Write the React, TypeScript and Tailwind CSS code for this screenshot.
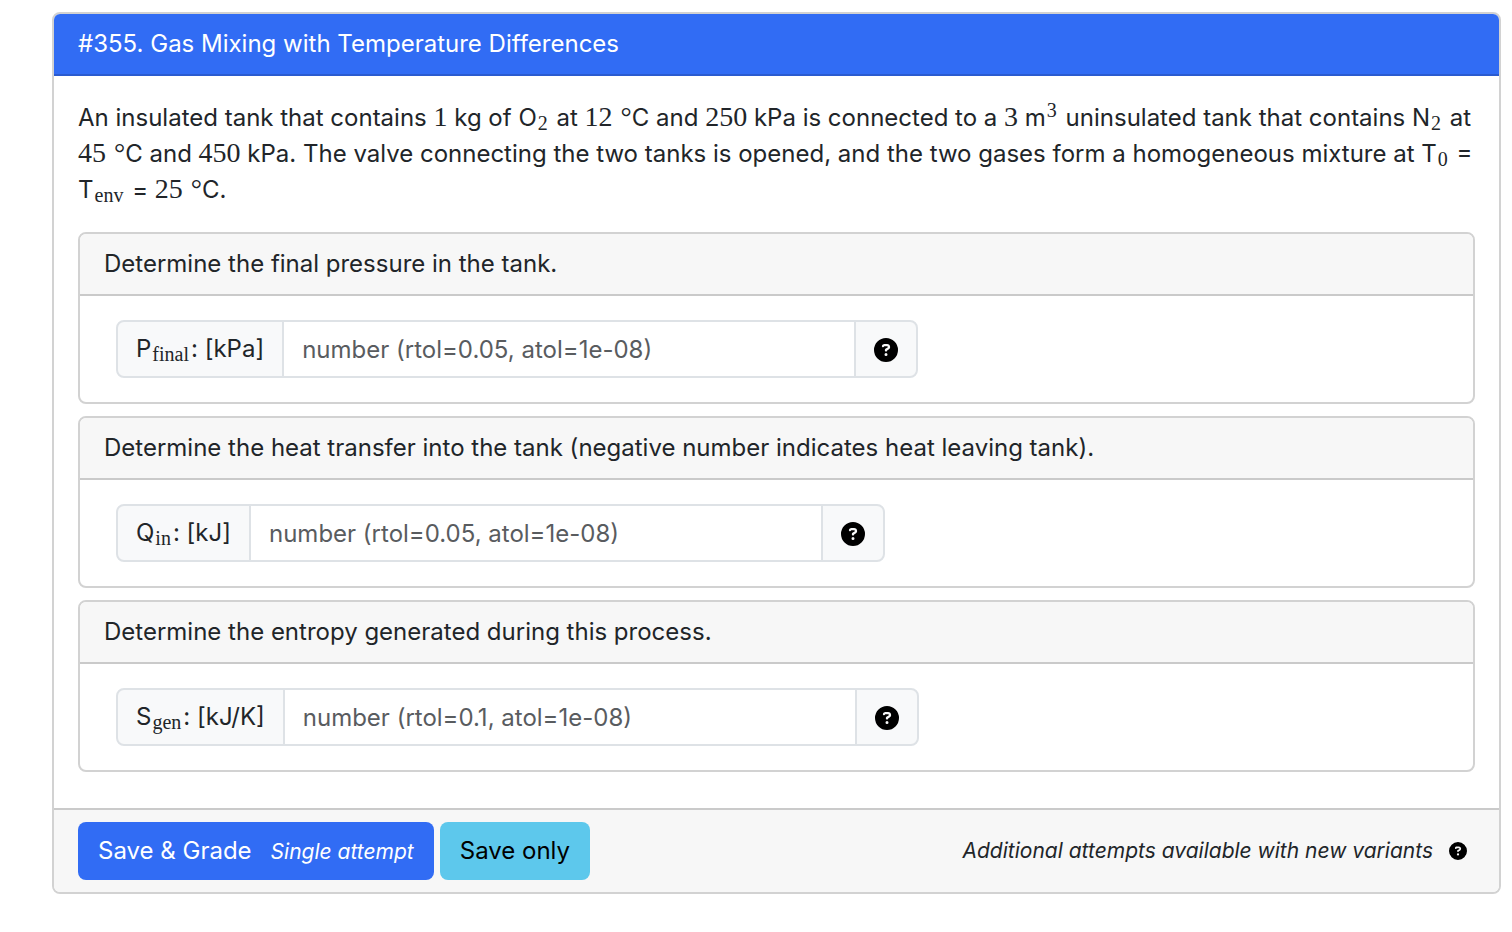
import type { ReactNode } from 'react';
import { FaCircleQuestion } from 'react-icons/fa6';

const serif = 'font-["Liberation_Serif",serif]';

function Num({ children }: { children: ReactNode }) {
  return <span className={`${serif} text-[28px] leading-none`}>{children}</span>;
}

function Sub({ children }: { children: ReactNode }) {
  return (
    <sub className={`${serif} bottom-[-4px] mr-0.5 ml-px align-baseline text-[20px] leading-none`}>
      {children}
    </sub>
  );
}

function Degree() {
  return <span className={`${serif} ml-2 text-[28px] leading-none`}>°</span>;
}

const questions = [
  {
    id: 'p-final',
    prompt: 'Determine the final pressure in the tank.',
    symbol: 'P',
    sub: 'final',
    unit: '[kPa]',
    placeholder: 'number (rtol=0.05, atol=1e-08)',
  },
  {
    id: 'q-in',
    prompt: 'Determine the heat transfer into the tank (negative number indicates heat leaving tank).',
    symbol: 'Q',
    sub: 'in',
    unit: '[kJ]',
    placeholder: 'number (rtol=0.05, atol=1e-08)',
  },
  {
    id: 's-gen',
    prompt: 'Determine the entropy generated during this process.',
    symbol: 'S',
    sub: 'gen',
    unit: '[kJ/K]',
    placeholder: 'number (rtol=0.1, atol=1e-08)',
  },
];

export default function App() {
  return (
    <main className='bg-white pt-3 pr-[11px] pb-9 pl-[52px] font-["Inter",sans-serif] text-[24px] leading-9 text-[#212529]'>
      <div className="overflow-hidden rounded-lg border-2 border-[#d2d2d2]">
        <h1 className="border-b-2 border-[#2b5bcf] bg-[#316cf4] px-6 py-3 text-white">
          #355. Gas Mixing with Temperature Differences
        </h1>

        {/* Problem statement */}
        <div className="px-6 pt-6 pb-9">
          <p className="mb-6">
            An insulated tank that contains <Num>1</Num> kg of O<Sub>2</Sub> at <Num>12</Num>
            <Degree />C and <Num>250</Num> kPa is connected to a <Num>3</Num> m
            <sup className={`${serif} top-[-9px] mr-0.5 ml-px align-baseline text-[20px] leading-none`}>
              3
            </sup>{' '}
            uninsulated tank that contains N<Sub>2</Sub> at <Num>45</Num>
            <Degree />C and <Num>450</Num> kPa. The valve connecting the two tanks is opened, and
            the two gases form a homogeneous mixture at T<Sub>0</Sub> = T<Sub>env</Sub> ={' '}
            <Num>25</Num>
            <Degree />C.
          </p>

          {/* Answer panels */}
          <div className="flex flex-col gap-3">
            {questions.map((q) => (
              <section key={q.id} className="overflow-hidden rounded-lg border-2 border-[#d2d2d2]">
                <h2 className="border-b-2 border-[#cacaca] bg-[#f7f7f7] px-6 py-3">{q.prompt}</h2>
                <div className="flex px-9 py-6">
                  <label
                    htmlFor={q.id}
                    className="rounded-l-lg border-2 border-[#dee2e6] bg-[#f8f9fa] px-[18px] py-[9px] whitespace-nowrap"
                  >
                    {q.symbol}
                    <Sub>{q.sub}</Sub>: {q.unit}
                  </label>
                  <input
                    id={q.id}
                    type="text"
                    placeholder={q.placeholder}
                    className="-ml-0.5 w-[574px] min-w-0 border-2 border-[#dee2e6] bg-white px-[18px] pt-[10px] pb-2 placeholder:text-[#595c5f]"
                  />
                  <button
                    type="button"
                    aria-label="Help"
                    className="-ml-0.5 rounded-r-lg border-2 border-[#dee2e6] bg-[#f8f9fa] px-[18px] pt-0.5 text-black"
                  >
                    <FaCircleQuestion className="size-6" />
                  </button>
                </div>
              </section>
            ))}
          </div>
        </div>

        {/* Footer actions */}
        <div className="flex items-center justify-between border-t-2 border-[#cacaca] bg-[#f7f7f7] px-6 py-3">
          <div className="flex gap-1.5">
            <button
              type="button"
              className="flex items-baseline gap-[19px] rounded-lg bg-[#316cf4] px-5 py-[11px] text-white"
            >
              <span>Save &amp; Grade</span>
              <span className="text-[21px] leading-8 italic">Single attempt</span>
            </button>
            <button type="button" className="rounded-lg bg-[#5dc8ec] px-5 py-[11px] text-black">
              Save only
            </button>
          </div>
          <div className="flex items-center gap-4 pr-2 text-[21px]">
            <em>Additional attempts available with new variants</em>
            <button type="button" aria-label="About new variants" className="text-black">
              <FaCircleQuestion className="size-[18px]" />
            </button>
          </div>
        </div>
      </div>
    </main>
  );
}
